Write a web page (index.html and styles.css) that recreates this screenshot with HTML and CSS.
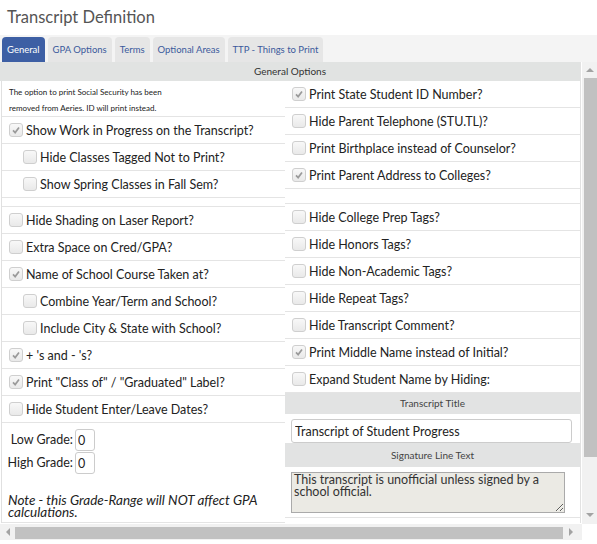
FILE: index.html
```html
<!DOCTYPE html>
<html lang="en">
<head>
    <meta charset="UTF-8">
    <title>Transcript Definition</title>
    <link rel="stylesheet" href="styles.css">
</head>
<body>
    <h1 class="page-title">Transcript Definition</h1>
    <div class="tabs">
        <a class="tab active">General</a>
        <a class="tab">GPA Options</a>
        <a class="tab">Terms</a>
        <a class="tab">Optional Areas</a>
        <a class="tab">TTP - Things to Print</a>
    </div>

    <div class="frame">
        <div class="viewport">
            <div class="sheet">
                <div class="section-head">General Options</div>
                <div class="columns">
                    <div class="col col-left">
                        <div class="row note">The option to print Social Security has been<br>removed from Aeries. ID will print instead.</div>
                        <div class="row"><span class="cb on"><svg viewBox="0 0 14 14"><path d="M3.5 7.5l2.5 2.5 4.5-6"/></svg></span>Show Work in Progress on the Transcript?</div>
                        <div class="row indent"><span class="cb"></span>Hide Classes Tagged Not to Print?</div>
                        <div class="row indent"><span class="cb"></span>Show Spring Classes in Fall Sem?</div>
                        <div class="row spacer-sm"></div>
                        <div class="row"><span class="cb"></span>Hide Shading on Laser Report?</div>
                        <div class="row"><span class="cb"></span>Extra Space on Cred/GPA?</div>
                        <div class="row"><span class="cb on"><svg viewBox="0 0 14 14"><path d="M3.5 7.5l2.5 2.5 4.5-6"/></svg></span>Name of School Course Taken at?</div>
                        <div class="row indent"><span class="cb"></span>Combine Year/Term and School?</div>
                        <div class="row indent"><span class="cb"></span>Include City &amp; State with School?</div>
                        <div class="row"><span class="cb on"><svg viewBox="0 0 14 14"><path d="M3.5 7.5l2.5 2.5 4.5-6"/></svg></span>+ 's and - 's?</div>
                        <div class="row"><span class="cb on"><svg viewBox="0 0 14 14"><path d="M3.5 7.5l2.5 2.5 4.5-6"/></svg></span>Print "Class of" / "Graduated" Label?</div>
                        <div class="row"><span class="cb"></span>Hide Student Enter/Leave Dates?</div>
                        <div class="grades">
                            <div class="grade-fields">
                                <label for="low">Low Grade:</label>
                                <input type="text" id="low" value="0">
                                <label for="high">High Grade:</label>
                                <input type="text" id="high" value="0">
                            </div>
                            <p class="grade-note">Note - this Grade-Range will NOT affect GPA calculations.</p>
                        </div>
                    </div>
                    <div class="col col-right">
                        <div class="row"><span class="cb on"><svg viewBox="0 0 14 14"><path d="M3.5 7.5l2.5 2.5 4.5-6"/></svg></span>Print State Student ID Number?</div>
                        <div class="row"><span class="cb"></span>Hide Parent Telephone (STU.TL)?</div>
                        <div class="row"><span class="cb"></span>Print Birthplace instead of Counselor?</div>
                        <div class="row"><span class="cb on"><svg viewBox="0 0 14 14"><path d="M3.5 7.5l2.5 2.5 4.5-6"/></svg></span>Print Parent Address to Colleges?</div>
                        <div class="row spacer-md"></div>
                        <div class="row"><span class="cb"></span>Hide College Prep Tags?</div>
                        <div class="row"><span class="cb"></span>Hide Honors Tags?</div>
                        <div class="row"><span class="cb"></span>Hide Non-Academic Tags?</div>
                        <div class="row"><span class="cb"></span>Hide Repeat Tags?</div>
                        <div class="row"><span class="cb"></span>Hide Transcript Comment?</div>
                        <div class="row"><span class="cb on"><svg viewBox="0 0 14 14"><path d="M3.5 7.5l2.5 2.5 4.5-6"/></svg></span>Print Middle Name instead of Initial?</div>
                        <div class="row"><span class="cb"></span>Expand Student Name by Hiding:</div>
                        <div class="sub-head">Transcript Title</div>
                        <div class="field-row">
                            <input type="text" class="title-input" value="Transcript of Student Progress">
                        </div>
                        <div class="sub-head sig-head">Signature Line Text</div>
                        <div class="field-row area-row">
                            <textarea class="sig-text">This transcript is unofficial unless signed by a school official.</textarea>
                        </div>
                    </div>
                </div>
            </div>
        </div>

        <div class="vscroll">
            <svg class="arrow" viewBox="0 0 8 4"><path d="M0 4L4 0L8 4Z"/></svg>
            <div class="vthumb"></div>
            <svg class="arrow" viewBox="0 0 8 4"><path d="M0 0L4 4L8 0Z"/></svg>
        </div>
        <div class="hscroll">
            <svg class="harrow" viewBox="0 0 4 8"><path d="M4 0L0 4L4 8Z"/></svg>
            <div class="hthumb"></div>
            <svg class="harrow" viewBox="0 0 4 8"><path d="M0 0L4 4L0 8Z"/></svg>
        </div>
        <div class="corner"></div>
    </div>
</body>
</html>
```

FILE: styles.css
```css
body {
    margin: 0;
    font-family: "Lato", "Open Sans", sans-serif;
    color: #222;
    background: #fff;
}
.page-title {
    margin: 0;
    height: 35px;
    padding: 6px 0 0 7px;
    box-sizing: border-box;
    font-size: 16.5px;
    line-height: 22px;
    font-weight: normal;
    color: #555;
}
.tabs {
    display: flex;
    gap: 3px;
    height: 27px;
    padding: 2px 2px 0;
    box-sizing: border-box;
    background: #f4f4f4;
}
.tab {
    padding: 0 5px;
    line-height: 25px;
    font-size: 9.5px;
    color: #3b5a9c;
    background: #e6e6e6;
    border-radius: 4px 4px 0 0;
}
.tab.active {
    background: #3d5fa4;
    color: #fff;
}

.frame {
    display: grid;
    grid-template-columns: 582px 15px;
    grid-template-rows: 462px 16px;
}
.viewport {
    overflow: hidden;
}
.sheet {
    width: 580px;
    border-right: 1px solid #e2e2e2;
}
.section-head {
    height: 19px;
    line-height: 19px;
    background: #e1e3e2;
    text-align: center;
    font-size: 10px;
    color: #333;
}
.columns {
    display: grid;
    grid-template-columns: 285px 1fr;
}
.col-left {
    margin-left: 1px;
    border-left: 1px solid #e0e0e0;
}
.row {
    display: flex;
    align-items: center;
    gap: 3px;
    height: 26px;
    border-bottom: 1px solid #e4e4e4;
    padding-left: 7px;
    font-size: 12.5px;
    white-space: nowrap;
}
.row.indent {
    padding-left: 21px;
}
.col-right .row {
    padding-left: 7px;
}
.row.note {
    display: block;
    height: 36px;
    padding-top: 3px;
    box-sizing: border-box;
    font-size: 8px;
    line-height: 16px;
}
.row.spacer-sm {
    height: 8px;
}
.row.spacer-md {
    height: 14px;
}
.cb {
    width: 12px;
    height: 12px;
    flex: none;
    border: 1px solid #cfcfcf;
    border-radius: 3px;
    background: linear-gradient(#f8f8f8, #e9e9e9);
}
.cb svg {
    display: block;
    width: 12px;
    height: 12px;
    fill: none;
    stroke: #9a9a9a;
    stroke-width: 2;
}

.grades {
    height: 99px;
    border-bottom: 1px solid #e4e4e4;
}
.grade-fields {
    display: grid;
    grid-template-columns: 66px 20px;
    column-gap: 2px;
    row-gap: 1px;
    padding: 6px 0 0 5px;
}
.grade-fields label {
    text-align: right;
    font-size: 12.5px;
    line-height: 22px;
}
.grade-fields input {
    width: 20px;
    height: 22px;
    box-sizing: border-box;
    border: 1px solid #ccc;
    border-radius: 3px;
    padding: 0 2px;
    font-family: inherit;
    font-size: 12.5px;
    color: #222;
}
.grade-note {
    margin: 20px 0 0 6px;
    width: 270px;
    font-size: 13.5px;
    line-height: 12px;
    font-style: italic;
}

.sub-head {
    height: 21px;
    line-height: 21px;
    background: #e2e3e3;
    text-align: center;
    font-size: 10px;
    color: #444;
}
.sig-head {
    height: 24px;
    line-height: 24px;
}
.field-row {
    padding: 5px 0 0 6px;
    height: 24px;
}
.title-input {
    width: 281px;
    height: 24px;
    box-sizing: border-box;
    border: 1px solid #ccc;
    border-radius: 3px;
    padding: 0 3px;
    font-family: inherit;
    font-size: 12.5px;
    color: #222;
}
.area-row {
    height: 45px;
    border-bottom: 1px solid #e4e4e4;
}
.sig-text {
    display: block;
    width: 274px;
    height: 41px;
    box-sizing: border-box;
    border: 1px solid #aaa;
    padding: 1px 2px;
    background: #ebeae4;
    font-family: inherit;
    font-size: 12.5px;
    line-height: 12px;
    color: #333;
    resize: both;
}

.vscroll {
    grid-row: 1;
    grid-column: 2;
    display: flex;
    flex-direction: column;
    align-items: center;
    background: #f1f1f1;
}
.vscroll .arrow {
    width: 8px;
    height: 4px;
    margin: 6px 0 6px;
    fill: #a3a3a3;
}
.vthumb {
    align-self: stretch;
    margin-left: 2px;
    height: 379px;
    background: #c1c1c1;
}
.vscroll .arrow:last-child {
    margin-top: auto;
    margin-bottom: 7px;
}
.hscroll {
    display: flex;
    align-items: center;
    background: #f1f1f1;
}
.harrow {
    width: 4px;
    height: 8px;
    margin: 0 5px 0 6px;
    fill: #a3a3a3;
}
.hthumb {
    width: 548px;
    height: 12px;
    margin-top: 2px;
    background: #c1c1c1;
}
.corner {
    background: #fff;
}
```
